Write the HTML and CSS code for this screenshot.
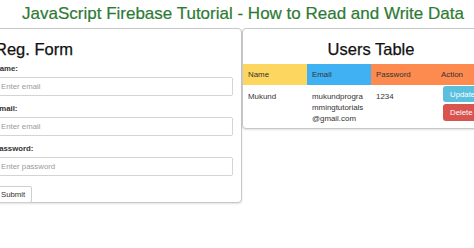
FILE: index.html
```html
<!DOCTYPE html>
<html>
<head>
<meta charset="utf-8">
<link rel="stylesheet" href="styles.css">
</head>
<body>
<div class="page">
  <h1 class="title">JavaScript Firebase Tutorial - How to Read and Write Data</h1>
  <div class="panels">
    <div class="panel form-panel">
      <h2 class="heading left">Reg. Form</h2>
      <div class="group">
        <label class="lbl">Name:</label>
        <input class="field" type="text" placeholder="Enter email">
      </div>
      <div class="group">
        <label class="lbl">Email:</label>
        <input class="field" type="text" placeholder="Enter email">
      </div>
      <div class="group">
        <label class="lbl">Password:</label>
        <input class="field" type="password" placeholder="Enter password">
      </div>
      <button class="submit">Submit</button>
    </div>
    <div class="panel table-panel">
      <h2 class="heading center">Users Table</h2>
      <table class="users">
        <colgroup>
          <col class="c1"><col class="c2"><col class="c3"><col class="c4">
        </colgroup>
        <thead>
          <tr>
            <th class="h-name">Name</th>
            <th class="h-email">Email</th>
            <th class="h-pass">Password</th>
            <th class="h-action">Action</th>
          </tr>
        </thead>
        <tbody>
          <tr>
            <td>Mukund</td>
            <td class="email">mukundprogrammingtutorials@gmail.com</td>
            <td>1234</td>
            <td class="actions">
              <button class="btn update">Update</button>
              <button class="btn delete">Delete</button>
            </td>
          </tr>
        </tbody>
      </table>
    </div>
  </div>
</div>
</body>
</html>
```
FILE: styles.css
```css
html, body {
  margin: 0;
  padding: 0;
  background: #ffffff;
}
body {
  font-family: "Liberation Sans", Arial, sans-serif;
  color: #333333;
  overflow: hidden;
  width: 474px;
  height: 248px;
}
.page {
  width: 514px;
  margin-left: -14px;
}
.title {
  margin: 0;
  padding-top: 4px;
  height: 24px;
  font-size: 17px;
  line-height: 20px;
  font-weight: normal;
  color: #2e7a34;
  text-align: center;
  white-space: nowrap;
  -webkit-text-stroke: 0.2px #2e7a34;
}
.panels {
  display: grid;
  grid-template-columns: 256px 258px;
  align-items: start;
}
.panel {
  border: 1px solid #c8c8c8;
  border-radius: 4px;
  box-shadow: 0 1px 2px rgba(0,0,0,0.12);
  background: #fff;
}
.form-panel {
  padding: 0 8px 0 7px;
  height: 173px;
}
.heading {
  margin: 10px 0 4px;
  font-size: 16.5px;
  line-height: 20px;
  font-weight: normal;
  color: #111;
  -webkit-text-stroke: 0.25px #111;
}
.heading.left { text-align: left; margin-left: 1px; }
.heading.center { text-align: center; margin-bottom: 5px; }
.group {
  display: flex;
  flex-direction: column;
  gap: 3px;
  margin-bottom: 7px;
}
.lbl {
  font-size: 7.8px;
  line-height: 11px;
  font-weight: bold;
  color: #333;
}
.field {
  box-sizing: border-box;
  height: 19px;
  width: 100%;
  margin: 0;
  border: 1px solid #d4d4d4;
  border-radius: 2px;
  padding: 0 6px;
  font-family: "Liberation Sans", Arial, sans-serif;
  font-size: 7.8px;
  color: #555;
  background: #fff;
}
.field::placeholder { color: #9a9a9a; }
.submit {
  margin-top: 2px;
  box-sizing: border-box;
  height: 17px;
  padding: 0 6px;
  border: 1px solid #cfcfcf;
  border-radius: 2px;
  background: #fff;
  font-family: "Liberation Sans", Arial, sans-serif;
  font-size: 7.8px;
  color: #333;
}
.table-panel {
  overflow: hidden;
}
.users {
  width: 100%;
  border-collapse: collapse;
  table-layout: fixed;
  font-size: 7.9px;
  margin-bottom: 4px;
}
.c1 { width: 64px; }
.c2 { width: 64px; }
.c3 { width: 65px; }
.users th {
  height: 21px;
  padding: 0 5px;
  text-align: left;
  font-weight: normal;
  color: #333;
  vertical-align: middle;
}
.h-name { background: #fdd660; }
.h-email { background: #40b2f3; }
.h-pass, .h-action { background: #fd8a4f; }
.users td {
  padding: 6px 5px 0;
  line-height: 11px;
  vertical-align: top;
  color: #333;
}
.users td.email { word-break: break-all; padding-right: 3px; }
.users td.actions { padding: 1px 0 0 7px; }
.btn {
  display: block;
  box-sizing: border-box;
  border: none;
  border-radius: 3px;
  padding: 0 7px;
  font-family: "Liberation Sans", Arial, sans-serif;
  font-size: 7.8px;
  color: #fff;
  white-space: nowrap;
}
.update { background: #5bc0de; height: 16px; margin-bottom: 2px; }
.delete { background: #d9534f; height: 17px; }
```
